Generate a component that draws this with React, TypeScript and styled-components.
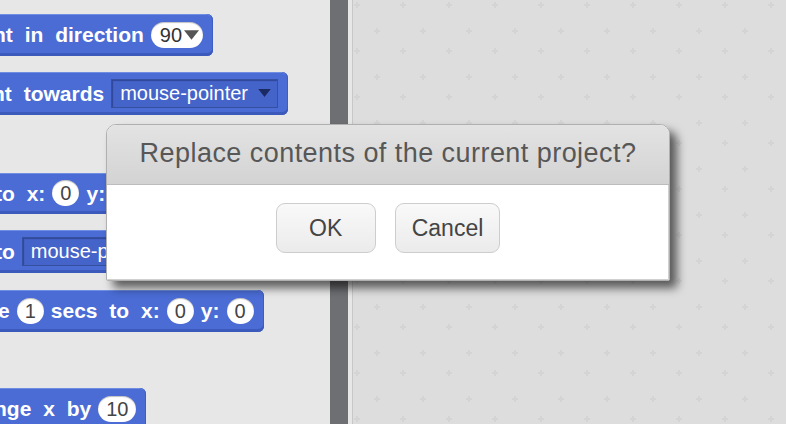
import React from "react";
import styled, { createGlobalStyle } from "styled-components";

const Global = createGlobalStyle`
  html, body { margin: 0; padding: 0; background: #e6e7e6; }
  body { font-family: "Liberation Sans", Arial, Helvetica, sans-serif; }
`;

const Page = styled.div`
  position: relative;
  width: 786px;
  height: 424px;
  display: flex;
  overflow: hidden;
`;

const Palette = styled.div`
  width: 330px;
  flex: none;
  background: #e6e7e6;
  overflow: hidden;
  display: flex;
  flex-direction: column;
  align-items: flex-start;
  padding-top: 14px;
  box-sizing: border-box;
`;

const Divider = styled.div`
  width: 18px;
  flex: none;
  background: #6e6f73;
`;

const Strip = styled.div`
  width: 4px;
  flex: none;
  background: #e6e7e6;
  border-right: 1px solid #c6c7c6;
`;

const Stage = styled.div`
  position: relative;
  flex: 1;
  background: #dcdddc;
  overflow: hidden;
`;

const PatternSvg = styled.svg`
  position: absolute;
  inset: 0;
  width: 100%;
  height: 100%;
`;

const Block = styled.div<{ $shift: number; $gap: number; $h: number }>`
  display: flex;
  align-items: center;
  gap: 7px;
  flex: none;
  height: ${(p) => p.$h}px;
  margin-top: ${(p) => p.$gap}px;
  margin-left: ${(p) => p.$shift}px;
  padding: 0 10px 1px 0;
  box-sizing: border-box;
  background: #4a6cd4;
  border-radius: 0 6px 6px 0;
  box-shadow: inset 0 -3px 0 #3c5abb, inset -1px 0 0 #3f5ec4,
    inset 0 1px 0 #6f8ee3;
  white-space: nowrap;
`;

const Label = styled.span`
  color: #fff;
  font-weight: bold;
  font-size: 21px;
  word-spacing: 6px;
  line-height: 1;
`;

const Round = styled.span`
  display: inline-flex;
  align-items: center;
  justify-content: center;
  height: 26px;
  min-width: 26px;
  padding: 0 8px;
  box-sizing: border-box;
  border-radius: 13px;
  background: #fff;
  color: #444;
  font-size: 20px;
  line-height: 1;
  box-shadow: inset 0 1px 1px rgba(0, 0, 0, 0.25);
`;

const AnglePill = styled(Round)`
  padding: 0 4px 0 9px;
  gap: 2px;
  color: #333;
`;

const Dropdown = styled.span`
  display: inline-flex;
  align-items: center;
  justify-content: space-between;
  height: 29px;
  width: 167px;
  padding: 0 6px 0 8px;
  box-sizing: border-box;
  background: #4564c9;
  border: 1px solid #34509f;
  box-shadow: inset 1px 1px 1px rgba(20, 35, 90, 0.45);
  color: #fff;
  font-size: 20px;
  line-height: 1;
`;

const Dialog = styled.div`
  position: absolute;
  left: 106px;
  top: 124px;
  width: 564px;
  height: 157px;
  box-sizing: border-box;
  border: 1px solid #b0b0b0;
  border-radius: 10px 10px 2px 2px;
  background: #fff;
  box-shadow: 7px 7px 10px rgba(0, 0, 0, 0.6);
  display: flex;
  flex-direction: column;
  overflow: hidden;
`;

const Header = styled.div`
  height: 60px;
  flex: none;
  box-sizing: border-box;
  border-bottom: 1px solid #bcbcbc;
  background: linear-gradient(#e3e3e3, #d3d3d3);
  display: flex;
  align-items: center;
  justify-content: center;
  padding-bottom: 3px;
  color: #575757;
  font-size: 27px;
  letter-spacing: 0.45px;
`;

const Body = styled.div`
  flex: 1;
  display: flex;
  justify-content: center;
  align-items: flex-start;
  gap: 19px;
  padding-top: 18px;
  box-shadow: inset -1px -1px 0 #d0d0d0;
`;

const Button = styled.button<{ $w?: number }>`
  height: 50px;
  ${(p) => (p.$w ? `width: ${p.$w}px;` : "padding: 0 16px;")}
  box-sizing: border-box;
  border: 1px solid #cdcdcd;
  border-radius: 9px;
  background: linear-gradient(#f9f9f9, #ebebeb);
  color: #444;
  font-family: "Liberation Sans", Arial, sans-serif;
  font-size: 23px;
  cursor: pointer;
`;

const Caret = ({ color, w = 14, h = 9 }: { color: string; w?: number; h?: number }) => (
  <svg width={w} height={h} viewBox="0 0 14 9">
    <polygon points="0,0 14,0 7,9" fill={color} />
  </svg>
);

export default function App() {
  return (
    <>
      <Global />
      <Page>
        <Palette>
          <Block $shift={-7} $gap={0} $h={42}>
            <Label>nt in direction</Label>
            <AnglePill>
              90
              <Caret color="#555" w={15} h={10} />
            </AnglePill>
          </Block>
          <Block $shift={-8} $gap={16} $h={43}>
            <Label>nt towards</Label>
            <Dropdown>
              mouse-pointer
              <Caret color="#1c2a63" w={13} h={8} />
            </Dropdown>
          </Block>
          <Block $shift={-5} $gap={58} $h={41}>
            <Label>to x:</Label>
            <Round>0</Round>
            <Label>y:</Label>
            <Round>0</Round>
          </Block>
          <Block $shift={-5} $gap={16} $h={43}>
            <Label>to</Label>
            <Dropdown>
              mouse-pointer
              <Caret color="#1c2a63" w={13} h={8} />
            </Dropdown>
          </Block>
          <Block $shift={-2} $gap={17} $h={42}>
            <Label>e</Label>
            <Round>1</Round>
            <Label>secs to x:</Label>
            <Round>0</Round>
            <Label>y:</Label>
            <Round>0</Round>
          </Block>
          <Block $shift={-6} $gap={56} $h={42}>
            <Label>nge x by</Label>
            <Round>10</Round>
          </Block>
        </Palette>
        <Divider />
        <Strip />
        <Stage>
          <PatternSvg>
            <defs>
              <pattern id="plus" x="0" y="0" width="46" height="46" patternUnits="userSpaceOnUse">
                <g fill="#d3d4d3">
                  <rect x="3" y="2" width="2" height="6" />
                  <rect x="1" y="4" width="6" height="2" />
                  <rect x="23" y="28" width="2" height="6" />
                  <rect x="21" y="30" width="6" height="2" />
                </g>
              </pattern>
            </defs>
            <rect width="100%" height="100%" fill="url(#plus)" />
          </PatternSvg>
        </Stage>
        <Dialog>
          <Header>Replace contents of the current project?</Header>
          <Body>
            <Button $w={100}>OK</Button>
            <Button>Cancel</Button>
          </Body>
        </Dialog>
      </Page>
    </>
  );
}
